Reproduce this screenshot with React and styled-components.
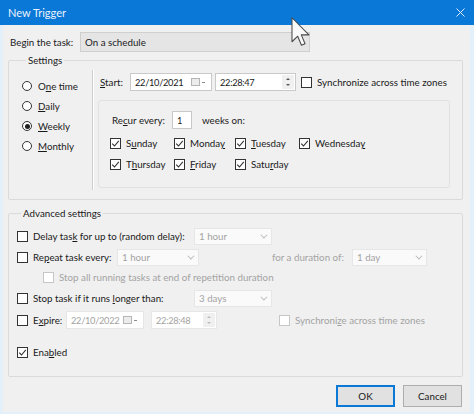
import React from 'react';
import styled, { createGlobalStyle } from 'styled-components';

const GlobalStyle = createGlobalStyle`
  html, body {
    margin: 0;
    padding: 0;
    background: #e3eff9;
  }
  body {
    font-family: Lato, "Noto Sans", sans-serif;
  }
`;

const Window = styled.div`
  width: 474px;
  height: 414px;
  display: flex;
  flex-direction: column;
  position: relative;
  overflow: hidden;
  background: #e3eff9;
  font-size: 9.75px;
  color: #1a1a1a;
`;

const TitleBar = styled.div`
  height: 25px;
  flex: none;
  background: #0a78d6;
  color: #eaf3fc;
  display: flex;
  align-items: center;
  justify-content: space-between;
  padding: 0 9px 0 8px;
  font-size: 11px;
`;

const Body = styled.div`
  flex: 1;
  margin: 0 4px 2px 3px;
  background: #f0f0f0;
  padding: 7px 7px 0 5px;
  display: flex;
  flex-direction: column;
`;

const TaskRow = styled.div`
  display: flex;
  align-items: center;
  padding-left: 2px;
`;

const Select = styled.div`
  width: ${p => p.w}px;
  height: ${p => p.h || 17}px;
  flex: none;
  box-sizing: border-box;
  display: flex;
  align-items: center;
  justify-content: space-between;
  padding: 0 6px 0 4px;
  background: ${p => (p.shaded ? '#e5e5e5' : '#fafafa')};
  border: 1px solid ${p => (p.shaded ? '#cfcfcf' : '#e6e6e6')};
  color: ${p => (p.shaded ? '#1a1a1a' : '#a3a3a3')};
`;

const Chevron = styled.span`
  width: 4px;
  height: 4px;
  border-right: 1px solid #b9b9b9;
  border-bottom: 1px solid #b9b9b9;
  transform: rotate(45deg) translateY(-2px);
`;

const Group = styled.fieldset`
  margin: ${p => p.top}px 0 0;
  border: 1px solid #dadada;
  border-radius: 2px;
  padding: ${p => p.pad};
  min-width: 0;
`;

const Legend = styled.legend`
  margin-left: 4px;
  padding: 0 2px;
  line-height: 14px;
  color: #1a1a1a;
`;

const SettingsLayout = styled.div`
  display: flex;
`;

const RadioList = styled.div`
  width: 70px;
  flex: none;
  padding-top: 12px;
  display: flex;
  flex-direction: column;
  gap: 6px;
`;

const RadioItem = styled.div`
  display: flex;
  align-items: center;
  gap: 6px;
  height: 14px;
`;

const RadioCircle = styled.span`
  width: 10px;
  height: 10px;
  box-sizing: border-box;
  border: 1px solid #333;
  border-radius: 50%;
  background: #fff;
  display: flex;
  align-items: center;
  justify-content: center;
  &::after {
    content: '';
    width: 5px;
    height: 5px;
    border-radius: 50%;
    background: ${p => (p.on ? '#222' : 'transparent')};
  }
`;

const Divider = styled.div`
  width: 1px;
  flex: none;
  margin: 3px 0 2px;
  background: #cfcfcf;
  box-shadow: 1px 0 0 #fff;
`;

const SchedulePane = styled.div`
  flex: 1;
  padding: 6px 0 4px 1px;
  display: flex;
  flex-direction: column;
  gap: 9px;
`;

const StartRow = styled.div`
  display: flex;
  align-items: center;
  padding-left: 6px;
`;

const Field = styled.div`
  width: ${p => p.w}px;
  height: ${p => p.h || 18}px;
  flex: none;
  margin-left: ${p => p.ml || 0}px;
  box-sizing: border-box;
  display: flex;
  align-items: center;
  justify-content: space-between;
  padding-left: 4px;
  background: #fff;
  border: 1px solid ${p => (p.disabled ? '#e6e6e6' : '#c9c9c9')};
  color: ${p => (p.disabled ? '#a3a3a3' : '#1a1a1a')};
  font-size: 9.25px;
  letter-spacing: -0.3px;
`;

const CalendarIcon = styled.span`
  display: flex;
  align-items: center;
  gap: 2px;
  margin-right: 6px;
  &::before {
    content: '';
    width: 7px;
    height: 6px;
    border: 1px solid #b5b5b5;
    background: #ececec;
  }
  &::after {
    content: '';
    width: 3px;
    height: 1px;
    background: #8d8d8d;
  }
`;

const Spinner = styled.span`
  width: 12px;
  align-self: stretch;
  margin: 1px;
  background: #f0f0f0;
  display: flex;
  flex-direction: column;
  align-items: center;
  justify-content: space-evenly;
`;

const SpinArrow = styled.span`
  width: 0;
  height: 0;
  border-left: 2px solid transparent;
  border-right: 2px solid transparent;
  ${p =>
    p.down
      ? `border-top: 2px solid ${p.disabled ? '#bbb' : '#555'};`
      : `border-bottom: 2px solid ${p.disabled ? '#bbb' : '#555'};`}
`;

const Check = styled.span`
  display: inline-flex;
  align-items: center;
  flex: none;
  gap: ${p => p.gap || 5}px;
  margin-left: ${p => p.ml || 0}px;
  color: ${p => (p.disabled ? '#a3a3a3' : '#1a1a1a')};
  white-space: nowrap;
`;

const Box = styled.span`
  width: 11px;
  height: 11px;
  flex: none;
  box-sizing: border-box;
  border: 1px solid ${p => (p.disabled ? '#c6c6c6' : '#333')};
  background: #fff;
  display: flex;
  align-items: center;
  justify-content: center;
`;

const RecurBox = styled.div`
  margin-left: 4px;
  height: 88px;
  box-sizing: border-box;
  border: 1px solid #e0e0e0;
  border-radius: 3px;
  padding: 10px 0 0 11px;
  display: flex;
  flex-direction: column;
`;

const RecurRow = styled.div`
  display: flex;
  align-items: center;
  padding-left: 2px;
`;

const DayGrid = styled.div`
  display: grid;
  grid-template-columns: 64px 61px 64px auto;
  grid-auto-rows: 16px;
  row-gap: 5px;
  align-items: center;
  margin-top: 6px;
`;

const AdvRow = styled.div`
  display: flex;
  align-items: center;
  height: 18px;
  margin-top: ${p => p.mt || 0}px;
  padding-left: ${p => p.indent || 0}px;
`;

const RowLabel = styled.span`
  display: inline-block;
  width: ${p => p.w}px;
  flex: none;
`;

const Muted = styled.span`
  display: inline-block;
  flex: none;
  color: ${p => (p.plain ? '#1a1a1a' : '#a3a3a3')};
  margin-left: ${p => p.ml || 0}px;
  width: ${p => (p.w ? `${p.w}px` : 'auto')};
`;

const Footer = styled.div`
  display: flex;
  justify-content: flex-end;
  gap: 8px;
  margin-top: 8px;
  padding-right: 1px;
`;

const Button = styled.div`
  width: 59px;
  height: 22px;
  box-sizing: border-box;
  display: flex;
  align-items: center;
  justify-content: center;
  background: #e1e1e1;
  border: ${p => (p.primary ? '2px solid #0a78d6' : '1px solid #adadad')};
  color: #1a1a1a;
`;

const Cursor = styled.svg`
  position: absolute;
  left: 291px;
  top: 17px;
`;

const CheckMark = () => (
  <svg width="9" height="9" viewBox="0 0 9 9">
    <path d="M1.2 4.6 L3.5 7 L7.8 1.8" fill="none" stroke="#333" strokeWidth="1.1" />
  </svg>
);

const CheckBox = ({ checked, disabled, children, gap, ml }) => (
  <Check disabled={disabled} gap={gap} ml={ml}>
    <Box disabled={disabled}>{checked && <CheckMark />}</Box>
    <span>{children}</span>
  </Check>
);

const Radio = ({ on, children }) => (
  <RadioItem>
    <RadioCircle on={on} />
    <span>{children}</span>
  </RadioItem>
);

const TimeField = ({ w, value, disabled, ml }) => (
  <Field w={w} disabled={disabled} ml={ml}>
    {value}
    <Spinner>
      <SpinArrow disabled={disabled} />
      <SpinArrow down disabled={disabled} />
    </Spinner>
  </Field>
);

const DateField = ({ w, value, disabled, ml }) => (
  <Field w={w} disabled={disabled} ml={ml}>
    {value}
    <CalendarIcon />
  </Field>
);

const Combo = ({ w, children }) => (
  <Select w={w}>
    {children}
    <Chevron />
  </Select>
);

export default function App() {
  return (
    <>
      <GlobalStyle />
      <Window>
        <TitleBar>
          <span>New Trigger</span>
          <svg width="9" height="9" viewBox="0 0 9 9">
            <path d="M0.5 0.5 L8.5 8.5 M8.5 0.5 L0.5 8.5" stroke="#dbe9f8" strokeWidth="1" />
          </svg>
        </TitleBar>
        <Body>
          <TaskRow>
            <RowLabel w={70}>Begin the task:</RowLabel>
            <Select w={230} h={20} shaded>
              On a schedule
            </Select>
          </TaskRow>

          <Group top={1} pad="0 12px 7px 13px">
            <Legend>Settings</Legend>
            <SettingsLayout>
              <RadioList>
                <Radio>O<u>n</u>e time</Radio>
                <Radio><u>D</u>aily</Radio>
                <Radio on><u>W</u>eekly</Radio>
                <Radio><u>M</u>onthly</Radio>
              </RadioList>
              <Divider />
              <SchedulePane>
                <StartRow>
                  <RowLabel w={30}><u>S</u>tart:</RowLabel>
                  <DateField w={82} value="22/10/2021" />
                  <TimeField w={81} value="22:28:47" ml={3} />
                  <CheckBox ml={5}>Synchronize across time zones</CheckBox>
                </StartRow>
                <RecurBox>
                  <RecurRow>
                    <RowLabel w={60}>Re<u>c</u>ur every:</RowLabel>
                    <Field w={20}>1</Field>
                    <Muted plain ml={10}>weeks on:</Muted>
                  </RecurRow>
                  <DayGrid>
                    <CheckBox checked>S<u>u</u>nday</CheckBox>
                    <CheckBox checked>Monda<u>y</u></CheckBox>
                    <CheckBox checked><u>T</u>uesday</CheckBox>
                    <CheckBox checked>Wednesda<u>y</u></CheckBox>
                    <CheckBox checked>T<u>h</u>ursday</CheckBox>
                    <CheckBox checked><u>F</u>riday</CheckBox>
                    <CheckBox checked>Satu<u>r</u>day</CheckBox>
                  </DayGrid>
                </RecurBox>
              </SchedulePane>
            </SettingsLayout>
          </Group>

          <Group top={6} pad="7px 8px 15px 8px">
            <Legend>Advanced settings</Legend>
            <AdvRow>
              <CheckBox gap={5}>
                <RowLabel w={161}>Delay tas<u>k</u> for up to (random delay):</RowLabel>
              </CheckBox>
              <Combo w={78}>1 hour</Combo>
            </AdvRow>
            <AdvRow mt={3}>
              <CheckBox gap={5}>
                <RowLabel w={84}>Re<u>p</u>eat task every:</RowLabel>
              </CheckBox>
              <Combo w={82}>1 hour</Combo>
              <Muted ml={73} w={80}>for a duration of:</Muted>
              <Combo w={75}>1 day</Combo>
            </AdvRow>
            <AdvRow mt={2} indent={26}>
              <CheckBox disabled gap={5}>Stop all running tasks at end of repetition durat<u>i</u>on</CheckBox>
            </AdvRow>
            <AdvRow mt={3}>
              <CheckBox gap={5}>
                <RowLabel w={161}>Stop task if it runs <u>l</u>onger than:</RowLabel>
              </CheckBox>
              <Combo w={78}>3 days</Combo>
            </AdvRow>
            <AdvRow mt={4}>
              <CheckBox gap={5}>
                <RowLabel w={33}>E<u>x</u>pire:</RowLabel>
              </CheckBox>
              <DateField w={78} value="22/10/2022" disabled />
              <TimeField w={66} value="22:28:48" disabled ml={7} />
              <CheckBox disabled ml={62} gap={5}>Synchroni<u>z</u>e across time zones</CheckBox>
            </AdvRow>
            <AdvRow mt={14}>
              <CheckBox checked gap={5}>Ena<u>b</u>led</CheckBox>
            </AdvRow>
          </Group>

          <Footer>
            <Button primary>OK</Button>
            <Button>Cancel</Button>
          </Footer>
        </Body>
        <Cursor width="20" height="30" viewBox="0 0 13 20">
          <path
            d="M0.5 0.5 L0.5 16.5 L4.3 12.8 L6.8 18.8 L9.2 17.8 L6.7 11.9 L11.8 11.9 Z"
            fill="#fafafa"
            stroke="#4a4a4a"
            strokeWidth="0.7"
            strokeLinejoin="round"
          />
        </Cursor>
      </Window>
    </>
  );
}
